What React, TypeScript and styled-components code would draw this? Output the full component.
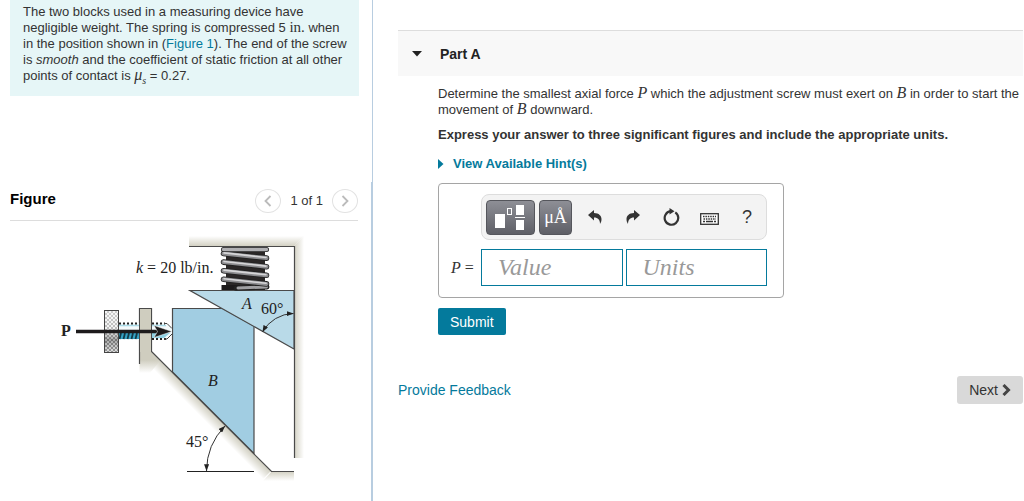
import React from "react";
import styled, { createGlobalStyle, css } from "styled-components";

const SANS = '"Liberation Sans", Arial, Helvetica, sans-serif';
const SERIF = '"Liberation Serif", "Times New Roman", serif';
const TEAL = "#047a9c";

const GlobalStyle = createGlobalStyle`
  * { box-sizing: border-box; }
  body {
    margin: 0;
    background: #fff;
    color: #333;
    font: 13px/16px ${SANS};
  }
  button, input { font-family: inherit; }
  a { color: ${TEAL}; text-decoration: none; }
`;

const Page = styled.div`
  display: grid;
  grid-template-columns: 373px minmax(0, 1fr);
  min-height: 100vh;
`;

const Sidebar = styled.aside`
  display: flex;
  flex-direction: column;
`;

const ProblemPane = styled.section`
  min-height: 182px;
  padding: 0 13px 0 10px;
  border-right: 1px solid #b8cde0;
`;

const ProblemText = styled.p`
  margin: 0;
  padding: 4px 10px 12px 13px;
  background: #e6f6f7;
`;

const FigurePane = styled.section`
  flex: 1;
  padding: 5px 13px 0 10px;
  border-right: 2px solid #b8cde0;
`;

const FigureHeader = styled.header`
  display: flex;
  align-items: center;
  justify-content: space-between;
  height: 34px;
  padding-bottom: 6px;
  border-bottom: 1px solid #ddd;
`;

const FigureTitle = styled.h2`
  margin: 0;
  padding-bottom: 4px;
  color: #000;
  font-size: 15px;
  line-height: 20px;
`;

const Pager = styled.nav`
  display: flex;
  align-items: center;
  gap: 9px;
`;

const PagerButton = styled.button`
  display: grid;
  place-items: center;
  width: 26px;
  height: 24px;
  padding: 0;
  border: 1px solid #e2e2e2;
  border-radius: 50%;
  background: #fff;
  color: #bbb;
`;

const Diagram = styled.svg`
  display: block;
  width: 260px;
  height: 260px;
  margin: 9px 0 0 40px;
  font-family: ${SERIF};
  font-size: 16px;
`;

const Main = styled.main`
  padding: 30px 1px 0 25px;
`;

const PartHeader = styled.header`
  display: flex;
  align-items: center;
  gap: 18px;
  height: 46px;
  padding: 0 14px;
  border-top: 1px solid #ddd;
  background: #f8f8f8;
`;

const PartTitle = styled.h2`
  margin: 0;
  font-size: 14px;
  line-height: 16px;
  color: #222;
`;

const PartBody = styled.div`
  padding: 10px 0 0 40px;
`;

const Paragraph = styled.p<{ $bold?: boolean }>`
  margin: 0 0 9px;
  font-weight: ${(p) => (p.$bold ? 700 : 400)};
`;

const Variable = styled.i`
  font-family: ${SERIF};
  font-size: 16px;
  line-height: 0;
`;

const Unit = styled.span`
  font-family: ${SERIF};
  font-size: 15px;
  line-height: 0;
`;

const Subscript = styled.sub`
  font-size: 10px;
  line-height: 0;
`;

const HintLink = styled.a`
  display: flex;
  align-items: center;
  gap: 9px;
  margin-top: 13px;
  font-weight: 700;
`;

const AnswerPanel = styled.form`
  display: grid;
  grid-template-columns: 30px 286px;
  row-gap: 9px;
  align-items: center;
  width: fit-content;
  margin-top: 11px;
  padding: 10px 16px 11px 12px;
  border: 1px solid #a5a5a5;
  border-radius: 4px;
`;

const Toolbar = styled.div`
  grid-column: 2;
  display: flex;
  align-items: center;
  height: 46px;
  padding-left: 4px;
  border: 1px solid #ddd;
  border-radius: 8px;
  background: #f3f3f3;
`;

const ToolButton = styled.button<{ $dark?: boolean; $wide?: boolean }>`
  display: grid;
  place-items: center;
  width: 38px;
  height: 35px;
  padding: 0;
  border: 0;
  background: none;
  color: #333;
  font-size: 18px;
  ${(p) =>
    p.$dark &&
    css`
      width: ${p.$wide ? 49 : 33}px;
      margin-right: 4px;
      border: 1px solid #55565c;
      border-radius: 4px;
      background: linear-gradient(#8e8f96, #5e5f66);
      color: #fff;
      font-family: ${SERIF};
    `}
`;

const AnswerLabel = styled.label`
  font: 16px/20px ${SERIF};
`;

const Fields = styled.div`
  display: grid;
  grid-template-columns: 1fr 1fr;
  gap: 3px;
`;

const AnswerInput = styled.input`
  width: 100%;
  height: 37px;
  padding: 0 16px;
  border: 1px solid ${TEAL};
  background: #fff;
  && {
    font: italic 24px ${SERIF};
  }
  &::placeholder {
    color: #999;
    opacity: 1;
  }
`;

const SubmitButton = styled.button`
  display: block;
  height: 27px;
  margin-top: 10px;
  padding: 0 12px;
  border: 0;
  border-radius: 2px;
  background: ${TEAL};
  color: #fff;
  font-size: 14px;
`;

const Footer = styled.footer`
  display: flex;
  align-items: center;
  justify-content: space-between;
  margin-top: 41px;
  font-size: 14px;
`;

const NextButton = styled.button`
  display: flex;
  align-items: center;
  gap: 4px;
  height: 28px;
  padding: 0 12px;
  border: 0;
  border-radius: 3px;
  background: #d9d9d9;
  color: #333;
  font-size: 14px;
`;

function Chevron({ left }: { left?: boolean }) {
  return (
    <svg width="8" height="12" viewBox="0 0 8 12" fill="none" stroke="currentColor" strokeWidth="1.8" aria-hidden>
      <path d={left ? "M6.5 1L1.5 6l5 5" : "M1.5 1l5 5-5 5"} />
    </svg>
  );
}

function Spring() {
  const coils = [0, 1, 2, 3];
  return (
    <g strokeLinecap="round" fill="none">
      <rect x="226" y="247" width="39" height="43" fill="#2a2727" />
      <path d="M221.500 285H240V290H221.500z" fill="#1d1b1c" />
      <path d="M236 288.300L267 287" stroke="#222" strokeWidth="5" />
      <path d="M238 288L266.500 287" stroke="#a0a0a3" strokeWidth="3" />
      {coils.map((i) => {
        const y = 253.5 + i * 8.6;
        return (
          <g key={i}>
            <path d={`M223.500 ${y}L266.500 ${y + 4.6}`} stroke="#222" strokeWidth="5.600" />
            <path d={`M223.500 ${y}L266.500 ${y + 4.6}`} stroke="#8d8d90" strokeWidth="4" />
            <path d={`M224 ${y - 0.6}L266 ${y + 4}`} stroke="#d6d6d8" strokeWidth="1.600" />
          </g>
        );
      })}
      <path d="M223.500 249.500H266.500" stroke="#222" strokeWidth="5" />
      <path d="M223.500 249.500H266.500" stroke="#b0b0b3" strokeWidth="3.400" />
    </g>
  );
}

function BlockDiagram() {
  return (
    <Diagram viewBox="50 230 260 260" role="img" aria-label="Blocks A and B loaded by a spring and an adjustment screw">
      <defs>
        <linearGradient id="up" x1="0" y1="1" x2="0" y2="0">
          <stop offset="0" stopColor="#d3d1c3" />
          <stop offset="1" stopColor="#fff" />
        </linearGradient>
        <linearGradient id="right">
          <stop offset="0" stopColor="#d3d1c3" />
          <stop offset="1" stopColor="#fff" />
        </linearGradient>
        <linearGradient id="down" x1="0" y1="0" x2="0" y2="1">
          <stop offset="0" stopColor="#d3d1c3" />
          <stop offset="1" stopColor="#fff" />
        </linearGradient>
        <linearGradient id="guide" gradientUnits="userSpaceOnUse" x1="0" y1="308" x2="0" y2="373">
          <stop offset="0.800" stopColor="#cfcdbf" />
          <stop offset="1" stopColor="#fff" />
        </linearGradient>
        <linearGradient id="slope" gradientUnits="userSpaceOnUse" x1="200" y1="400" x2="192" y2="408">
          <stop offset="0" stopColor="#cfcdbf" />
          <stop offset="1" stopColor="#fff" />
        </linearGradient>
        <pattern id="knurl" width="4" height="4" patternUnits="userSpaceOnUse">
          <rect width="4" height="4" fill="#eceded" />
          <path d="M0 0l4 4M4 0L0 4" stroke="#8a8a8a" strokeWidth=".8" />
        </pattern>
        <linearGradient id="knobShade" x1="0" y1="0" x2="0" y2="1">
          <stop offset="0" stopColor="#fff" stopOpacity=".5" />
          <stop offset="0.450" stopColor="#fff" stopOpacity=".3" />
          <stop offset="0.700" stopColor="#222" stopOpacity=".35" />
          <stop offset="1" stopColor="#555" stopOpacity=".1" />
        </linearGradient>
        <marker id="tip" viewBox="0 0 8 6" refX="8" refY="3" markerWidth="7" markerHeight="5" orient="auto-start-reverse">
          <path d="M0 0L8 3L0 6z" fill="#222" />
        </marker>
      </defs>

      <path d="M189 246V236H304L294 246z" fill="url(#up)" />
      <path d="M294 246L304 236V458H294z" fill="url(#right)" />
      <path d="M151 351L271 471L263 479L139 363V351z" fill="url(#slope)" />
      <path d="M271.500 471.500H294V481H263z" fill="url(#down)" />
      <path d="M139.500 308.500H151.500V352L160 361L150 373H139.500z" fill="url(#guide)" />

      <g stroke="#4a4a4a" strokeWidth="1.200" fill="none">
        <path d="M189 246.500H294.500V458" />
        <path d="M172.500 372V308.500H223L254 326V453.500z" fill="#a1cde2" />
        <path d="M190 290.500H294V349z" fill="#b9dae8" />
        <path d="M139.500 364V308.500H151.500V351.500L271.500 471.500H294" />
        <path d="M187 471.500H254" stroke="#222" />
      </g>

      <Spring />

      <path d="M119 323h20v17h-20zM152 323h12l8 4v8l-8 4h-12z" fill="#f4fafb" />
      <path d="M119 325.500H139M152 325.500H166" stroke="#a9dbe8" strokeWidth="1.500" />
      <path d="M119 332h20v7h-20z" fill="#35a3c4" />
      <path d="M152 333h18l-6 5h-12z" fill="#8fd0e2" />
      <path d="M119 323.500H139M152 323.500H165" stroke="#222" strokeWidth="2" strokeDasharray="2 2" />
      <path d="M121 333l-1.500 6M125 333l-1.500 6M129 333l-1.500 6M133 333l-1.500 6M137 333l-1.500 6" stroke="#143b48" strokeWidth="1.800" />
      <path d="M152 339H166" stroke="#222" strokeWidth="2" strokeDasharray="2 2" />
      <path d="M164 323.500h3l5 5M164 339h3l5-5" stroke="#444" fill="none" />
      <path d="M139.500 352V308.500H151.500V352" stroke="#4a4a4a" fill="#cfcdbf" />
      <rect x="104.500" y="310.500" width="14" height="42" fill="url(#knurl)" />
      <rect x="104.500" y="310.500" width="14" height="42" fill="url(#knobShade)" stroke="#444" />
      <path d="M76 331.500H160" stroke="#1d1b1c" strokeWidth="3.400" />
      <path d="M172 331.500L154 325.500L157.500 331.500L154 337.500z" fill="#1d1b1c" stroke="#fff" strokeWidth=".5" />

      <g fill="none" stroke="#333">
        <path d="M293.500 313.500A36 36 0 0 0 262.500 332" markerStart="url(#tip)" markerEnd="url(#tip)" />
        <path d="M225 426A65 65 0 0 0 206.500 471" markerStart="url(#tip)" markerEnd="url(#tip)" />
      </g>

      <g fill="#222">
        <text x="136" y="273"><tspan fontStyle="italic">k</tspan> = 20 lb/in.</text>
        <text x="61" y="336" fontWeight="700">P</text>
        <text x="242" y="309" fontStyle="italic">A</text>
        <text x="261" y="314">60°</text>
        <text x="208" y="386" fontStyle="italic">B</text>
        <text x="186" y="447">45°</text>
      </g>
    </Diagram>
  );
}

function TemplateIcon() {
  return (
    <svg width="31" height="27" viewBox="0 0 31 27" fill="#fff" aria-hidden>
      <rect x="0" y="10" width="10" height="14" />
      <rect x="12.500" y="4.500" width="4" height="6" fill="none" stroke="#fff" />
      <rect x="21" y="1" width="8" height="10" />
      <rect x="20" y="13" width="10" height="1" />
      <rect x="21" y="16" width="8" height="10" />
    </svg>
  );
}

function ArrowIcon({ flip }: { flip?: boolean }) {
  return (
    <svg width="14" height="14" viewBox="0 0 14 14" fill="currentColor" aria-hidden>
      <path
        transform={flip ? "translate(14 0) scale(-1 1)" : undefined}
        d="M0 5L6 0V3C11 3 13.500 6 13.500 9C13.500 11 13 12.500 12 14C12 10 10 7.600 6 7.600V10.500z"
      />
    </svg>
  );
}

function ResetIcon() {
  return (
    <svg width="18" height="18" viewBox="0 0 18 18" aria-hidden>
      <path d="M13.300 4.300A6.800 6.800 0 1 1 8.500 3.200" fill="none" stroke="currentColor" strokeWidth="2.200" />
      <path d="M7.500 0L12.500 3.200L7.500 6.500z" fill="currentColor" />
    </svg>
  );
}

function KeyboardIcon() {
  return (
    <svg width="19" height="18" viewBox="0 0 19 18" aria-hidden>
      <rect x=".7" y="5.700" width="17.600" height="10.600" fill="#fff" stroke="currentColor" strokeWidth="1.300" />
      <path d="M3 8.500H16M3.500 11H16" stroke="currentColor" strokeWidth="1.500" strokeDasharray="1.500 .9" />
      <path d="M3 13.500H5M6 13.500H13M14 13.500H16" stroke="currentColor" strokeWidth="1.300" />
    </svg>
  );
}

export default function App() {
  return (
    <Page>
      <GlobalStyle />
      <Sidebar>
        <ProblemPane>
          <ProblemText>
            The two blocks used in a measuring device have negligible weight. The spring is compressed 5{" "}
            <Unit>in.</Unit> when in the position shown in (<a href="#figure">Figure 1</a>). The end of the screw is{" "}
            <em>smooth</em> and the coefficient of static friction at all other points of contact is{" "}
            <Variable>
              μ<Subscript>s</Subscript>
            </Variable>{" "}
            = 0.27.
          </ProblemText>
        </ProblemPane>
        <FigurePane id="figure">
          <FigureHeader>
            <FigureTitle>Figure</FigureTitle>
            <Pager aria-label="Figures">
              <PagerButton type="button" aria-label="Previous figure">
                <Chevron left />
              </PagerButton>
              <span>1 of 1</span>
              <PagerButton type="button" aria-label="Next figure">
                <Chevron />
              </PagerButton>
            </Pager>
          </FigureHeader>
          <BlockDiagram />
        </FigurePane>
      </Sidebar>

      <Main>
        <PartHeader>
          <svg width="10" height="6" viewBox="0 0 10 6" fill="#222" aria-hidden>
            <path d="M0 0H10L5 5.500z" />
          </svg>
          <PartTitle>Part A</PartTitle>
        </PartHeader>
        <PartBody>
          <Paragraph>
            Determine the smallest axial force <Variable>P</Variable> which the adjustment screw must exert on{" "}
            <Variable>B</Variable> in order to start the movement of <Variable>B</Variable> downward.
          </Paragraph>
          <Paragraph $bold>Express your answer to three significant figures and include the appropriate units.</Paragraph>
          <HintLink href="#hints">
            <svg width="6" height="10" viewBox="0 0 6 10" fill="currentColor" aria-hidden>
              <path d="M0 0L5.500 5L0 10z" />
            </svg>
            View Available Hint(s)
          </HintLink>
          <AnswerPanel>
            <Toolbar role="toolbar" aria-label="Answer tools">
              <ToolButton type="button" $dark $wide aria-label="Templates">
                <TemplateIcon />
              </ToolButton>
              <ToolButton type="button" $dark>
                μÅ
              </ToolButton>
              <ToolButton type="button" aria-label="Undo">
                <ArrowIcon />
              </ToolButton>
              <ToolButton type="button" aria-label="Redo">
                <ArrowIcon flip />
              </ToolButton>
              <ToolButton type="button" aria-label="Reset">
                <ResetIcon />
              </ToolButton>
              <ToolButton type="button" aria-label="Keyboard shortcuts">
                <KeyboardIcon />
              </ToolButton>
              <ToolButton type="button">?</ToolButton>
            </Toolbar>
            <AnswerLabel htmlFor="value">
              <i>P</i> =
            </AnswerLabel>
            <Fields>
              <AnswerInput id="value" placeholder="Value" />
              <AnswerInput aria-label="Units" placeholder="Units" />
            </Fields>
          </AnswerPanel>
          <SubmitButton type="button">Submit</SubmitButton>
        </PartBody>
        <Footer>
          <a href="#feedback">Provide Feedback</a>
          <NextButton type="button">
            Next
            <svg width="9" height="12" viewBox="0 0 9 12" fill="none" stroke="#444" strokeWidth="3" aria-hidden>
              <path d="M1.500 1L6.500 6l-5 5" />
            </svg>
          </NextButton>
        </Footer>
      </Main>
    </Page>
  );
}
